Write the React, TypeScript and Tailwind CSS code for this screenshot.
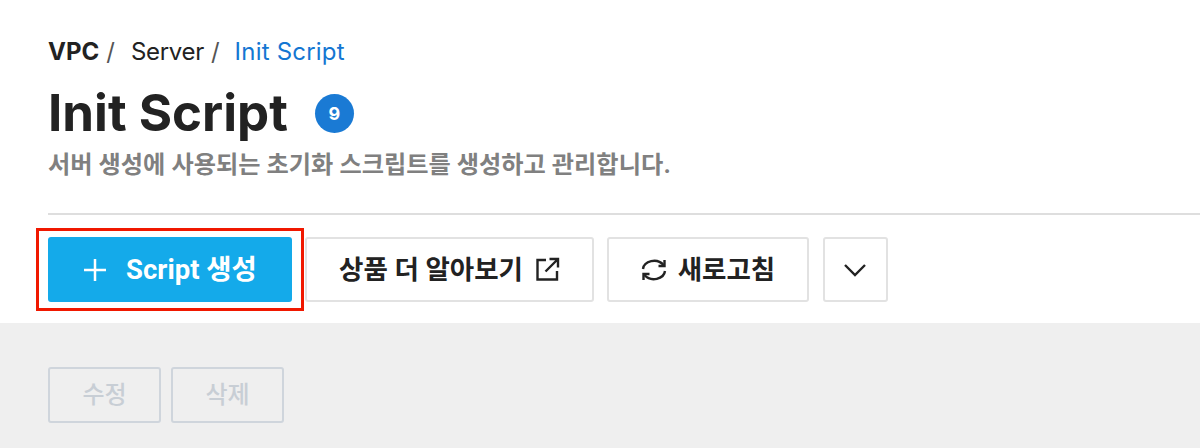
const font = "font-['Inter','Noto_Sans_CJK_KR',sans-serif]";
const btnFont = "font-['Roboto','Noto_Sans_CJK_KR',sans-serif]";
const btn = `${btnFont} h-[65px] flex items-center justify-center rounded-[3px] border-2 border-[#e2e2e2] bg-white text-[#222] text-[26.500px] font-semibold`;

function ExternalIcon() {
  return (
    <svg width="25" height="25" viewBox="0 0 25 25" fill="none" stroke="#222" strokeWidth="2.4" className="ml-[12px]">
      <path d="M11 3H2.500V22.500H22V14" />
      <path d="M10.500 14.500L22.500 2.500M14.500 2H23V10.500" />
    </svg>
  );
}

function RefreshIcon() {
  return (
    <svg width="26" height="26" viewBox="0 0 26 26" fill="none" stroke="#222" strokeWidth="2.400" className="mr-[11px]">
      <path d="M2 12C3 4 16 0.500 22.500 8" />
      <path d="M24 14C23 22 10 25.500 3.500 18" />
      <path d="M23.500 3V9H17.500M2.500 23V17H8.500" />
    </svg>
  );
}

export default function App() {
  return (
    <div className={`${font} w-[1200px] h-[448px] overflow-hidden bg-white flex flex-col`}>
      <div className="h-[323px] shrink-0 pl-[48px] pt-[37px]">
        <div className="flex items-center text-[24px] leading-[30px] h-[30px] text-[#222]">
          <span className="font-bold">VPC</span>
          <span className="ml-[7px] text-[#555]">/</span>
          <span className="ml-[16px] tracking-[-0.3px]">Server</span>
          <span className="ml-[7px] text-[#555]">/</span>
          <span className="ml-[15px] text-[#1476d2] tracking-[0.2px]">Init Script</span>
        </div>
        <div className="flex items-center mt-[18px] h-[56px]">
          <h1 className="text-[51px] leading-[56px] font-bold text-[#222]">Init Script</h1>
          <span className="ml-[27px] w-[39px] h-[39px] rounded-full bg-[#1a7ad4] text-white text-[18px] font-bold flex items-center justify-center">9</span>
        </div>
        <p className="text-[24.200px] leading-[32px] font-semibold text-[#808080] mt-[8px]">
          서버 생성에 사용되는 초기화 스크립트를 생성하고 관리합니다.
        </p>
        <div className="h-[2px] bg-[#dedede] mt-[32px]" />
        <div className="flex items-center gap-[13px] mt-[22px]">
          <div className={`${btnFont} relative w-[244px] h-[65px] rounded-[3px] bg-[#14aaea] text-white text-[27.500px] font-bold flex items-center justify-center`}>
            <svg width="24" height="24" viewBox="0 0 24 24" stroke="white" strokeWidth="2.500" className="mr-[19px]">
              <path d="M12 1V23M1 12H23" />
            </svg>
            <span>Script 생성</span>
            <div className="absolute -left-[12px] -top-[9px] w-[268px] h-[83px] border-[3px] border-[#f01800]" />
          </div>
          <button className={`${btn} w-[289px]`}>
            상품 더 알아보기
            <ExternalIcon />
          </button>
          <button className={`${btn} w-[202px]`}>
            <RefreshIcon />
            새로고침
          </button>
          <button className={`${btn} w-[65px] ml-[1px]`}>
            <svg width="24" height="14" viewBox="0 0 24 14" fill="none" stroke="#222" strokeWidth="2.400" className="-ml-[2px]">
              <path d="M2 2L12 12L22 2" />
            </svg>
          </button>
        </div>
      </div>
      <div className="flex-1 bg-[#efefef] pl-[48px] pt-[44px]">
        <div className="flex gap-[10px]">
          {['수정', '삭제'].map(label => (
            <button key={label} className="w-[113px] h-[56px] rounded-[3px] border-2 border-[#cfd5dc] text-[#c8ced5] text-[24px] font-medium flex items-center justify-center">
              {label}
            </button>
          ))}
        </div>
      </div>
    </div>
  );
}
